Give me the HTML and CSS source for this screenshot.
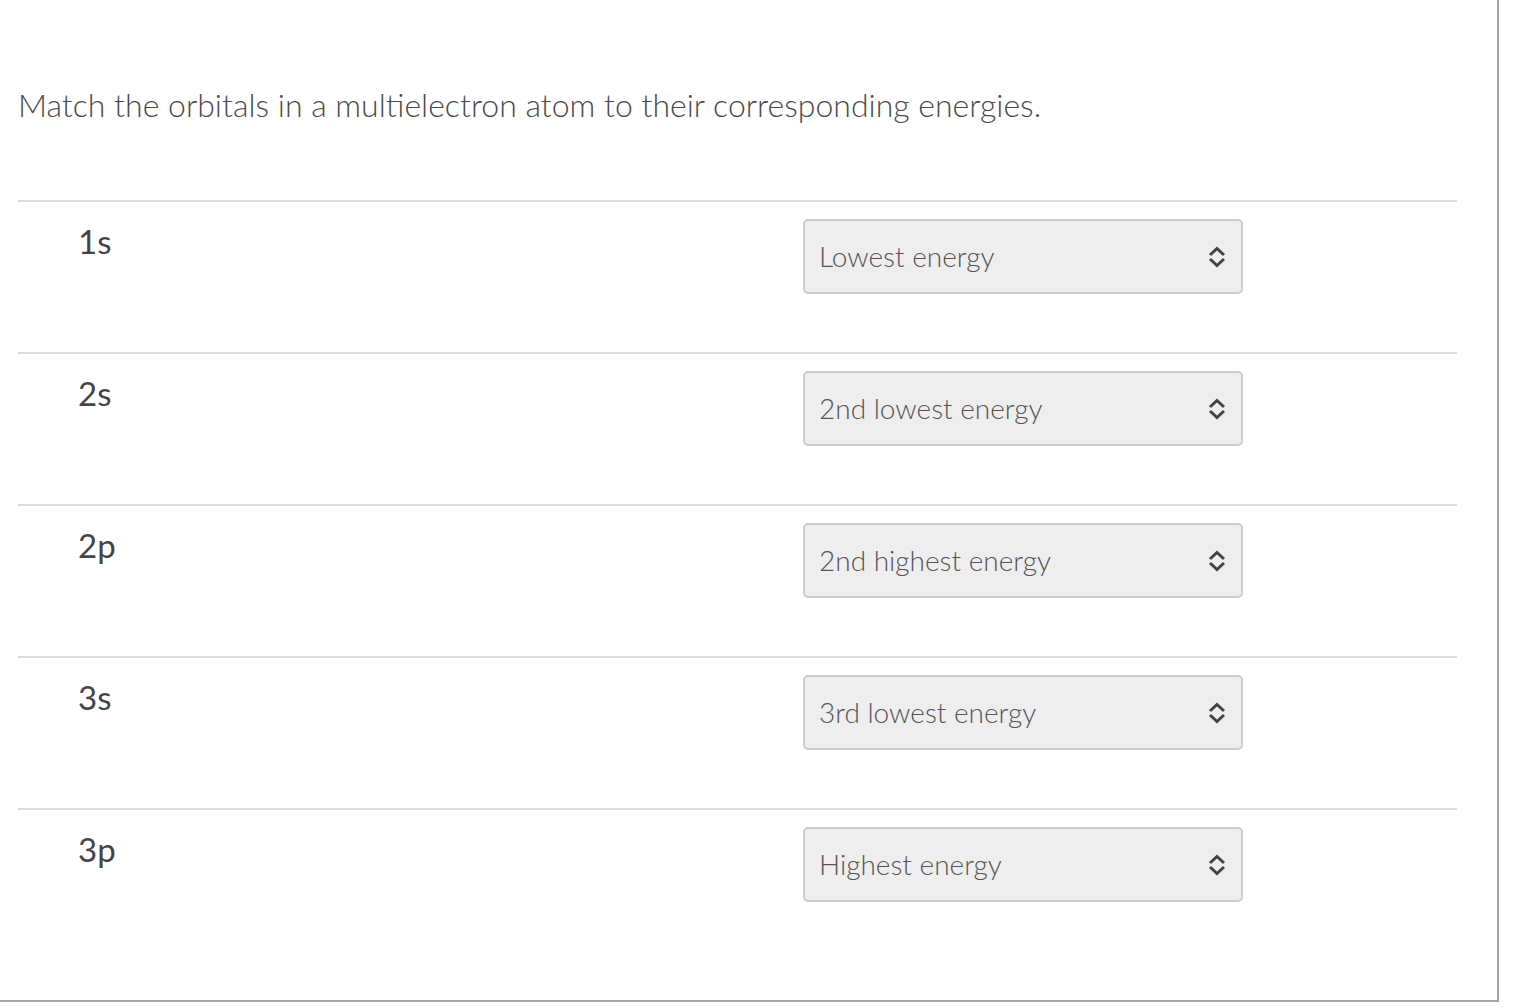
FILE: index.html
```html
<!DOCTYPE html>
<html lang="en">
<head>
    <meta charset="UTF-8">
    <title>Match the orbitals</title>
    <link rel="stylesheet" href="styles.css">
</head>
<body>
    <div class="frame">
        <p class="question">Match the orbitals in a multielectron atom to their corresponding energies.</p>

        <div class="match-list">
            <div class="match-row">
                <div class="orbital">1s</div>
                <div class="dropdown">
                    <span class="dropdown-text">Lowest energy</span>
                    <svg class="chevron" width="18" height="24" viewBox="0 0 18 24"><path d="M2 10 L9 3.5 L16 10 M2 14 L9 20.5 L16 14" fill="none" stroke="#444" stroke-width="3"/></svg>
                </div>
            </div>
            <div class="match-row">
                <div class="orbital">2s</div>
                <div class="dropdown">
                    <span class="dropdown-text">2nd lowest energy</span>
                    <svg class="chevron" width="18" height="24" viewBox="0 0 18 24"><path d="M2 10 L9 3.5 L16 10 M2 14 L9 20.5 L16 14" fill="none" stroke="#444" stroke-width="3"/></svg>
                </div>
            </div>
            <div class="match-row">
                <div class="orbital">2p</div>
                <div class="dropdown">
                    <span class="dropdown-text">2nd highest energy</span>
                    <svg class="chevron" width="18" height="24" viewBox="0 0 18 24"><path d="M2 10 L9 3.5 L16 10 M2 14 L9 20.5 L16 14" fill="none" stroke="#444" stroke-width="3"/></svg>
                </div>
            </div>
            <div class="match-row">
                <div class="orbital">3s</div>
                <div class="dropdown">
                    <span class="dropdown-text">3rd lowest energy</span>
                    <svg class="chevron" width="18" height="24" viewBox="0 0 18 24"><path d="M2 10 L9 3.5 L16 10 M2 14 L9 20.5 L16 14" fill="none" stroke="#444" stroke-width="3"/></svg>
                </div>
            </div>
            <div class="match-row">
                <div class="orbital">3p</div>
                <div class="dropdown">
                    <span class="dropdown-text">Highest energy</span>
                    <svg class="chevron" width="18" height="24" viewBox="0 0 18 24"><path d="M2 10 L9 3.5 L16 10 M2 14 L9 20.5 L16 14" fill="none" stroke="#444" stroke-width="3"/></svg>
                </div>
            </div>
        </div>
    </div>
</body>
</html>
```

FILE: styles.css
```css
* {
    margin: 0;
    padding: 0;
    box-sizing: border-box;
}

html, body {
    background: #ffffff;
    font-family: 'Lato', 'Open Sans', sans-serif;
}

/* outer frame, only right and bottom edges show */
.frame {
    width: 1499px;
    height: 1002px;
    padding: 0 40px 0 18px;
    border-right: 2px solid #a6a6a6;
    border-bottom: 2px solid #a6a6a6;
}

.question {
    padding-top: 85px;
    font-size: 32px;
    line-height: 40px;
    font-weight: 300;
    color: #4a4a4a;
}

.match-list {
    margin-top: 75px;
}

.match-row {
    height: 152px;
    border-top: 2px solid #dddddd;
    padding: 17px 0 0 60px;
    display: flex;
    align-items: flex-start;
}

.orbital {
    width: 725px;
    margin-top: 4px;
    font-size: 33px;
    line-height: 36px;
    color: #444444;
}

/* fake select box */
.dropdown {
    width: 440px;
    height: 75px;
    background: #eeeeee;
    border: 2px solid #cccccc;
    border-radius: 5px;
    padding: 0 15px 0 14px;
    display: flex;
    align-items: center;
    justify-content: space-between;
}

.dropdown-text {
    font-size: 28px;
    font-weight: 300;
    color: #555555;
    margin-bottom: 2px;
}

.chevron {
    display: block;
}
```
